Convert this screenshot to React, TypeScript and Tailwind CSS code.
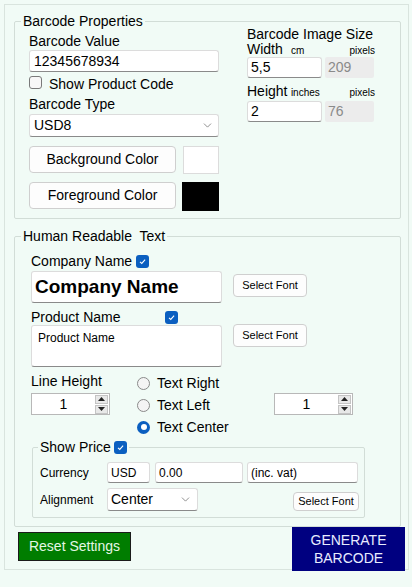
import { ChevronDown } from 'lucide-react';

const inputBox =
  'bg-white border border-[#dcdcdc] border-b-[#8a8a8a] rounded-[3px] flex items-center';
const button =
  'bg-[#fdfdfd] border border-[#cfcfcf] rounded-[4px] flex items-center justify-center text-black';

const Checked = () => (
  <span className="flex h-[13px] w-[13px] items-center justify-center rounded-[3px] bg-[#0b5fc0]">
    <svg width="9" height="9" viewBox="0 0 10 10">
      <path d="M2.2 5.3 4.2 7.2 7.9 3" fill="none" stroke="white" strokeWidth="1.2" />
    </svg>
  </span>
);

const Radio = ({ on, label }: { on?: boolean; label: string }) => (
  <div className="flex h-[22px] items-center">
    {on ? (
      <span className="flex h-[13px] w-[13px] items-center justify-center rounded-full bg-[#0b5fc0]">
        <span className="h-[6px] w-[6px] rounded-full bg-white" />
      </span>
    ) : (
      <span className="h-[13px] w-[13px] rounded-full border border-[#8a8a8a] bg-[#f4f4f4]" />
    )}
    <span className="ml-[7px] text-[14px] leading-[18px]">{label}</span>
  </div>
);

const Spinner = () => (
  <div className="flex h-[22px] w-[79px] items-center border border-[#b8b8b8] bg-white">
    <span className="flex-1 text-center text-[14px] leading-[18px]">1</span>
    <div className="mr-[1px] flex flex-col gap-[1px]">
      <span className="flex h-[9px] w-[13px] items-center justify-center border border-[#c4c4c4] bg-[#e8e8e8]">
        <svg width="7" height="4" viewBox="0 0 7 4">
          <path d="M0 4 3.5 0 7 4Z" fill="#222" />
        </svg>
      </span>
      <span className="flex h-[9px] w-[13px] items-center justify-center border border-[#c4c4c4] bg-[#e8e8e8]">
        <svg width="7" height="4" viewBox="0 0 7 4">
          <path d="M0 0 3.5 4 7 0Z" fill="#222" />
        </svg>
      </span>
    </div>
  </div>
);

export default function App() {
  return (
    <div className="h-[587px] w-[412px] bg-[#f1fbf6] pl-[4px] pt-[4px] font-['Liberation_Sans',Arial,sans-serif] text-black">
      <div className="flex h-[566px] w-[405px] flex-col border border-[#d9e4de]">
        {/* Barcode Properties */}
        <fieldset className="ml-[9px] mt-[7px] w-[387px] rounded-[2px] border border-[#d2ddd7] pb-[7px]">
          <legend className="ml-[6px] px-[2px] text-[14px] leading-[18px]">Barcode Properties</legend>
          <div className="flex">
            <div className="ml-[14px] flex w-[190px] flex-col">
              <span className="mt-[2px] text-[14px] leading-[18px]">Barcode Value</span>
              <div className={`${inputBox} h-[22px] px-[4px] text-[14px]`}>12345678934</div>
              <div className="mt-[3px] flex h-[18px] items-start">
                <span className="mt-[1px] h-[13px] w-[13px] rounded-[3px] border border-[#7a7a7a] bg-[#f7f7f7]" />
                <span className="ml-[7px] text-[14px] leading-[18px]">Show Product Code</span>
              </div>
              <span className="mt-[2px] text-[14px] leading-[18px]">Barcode Type</span>
              <div className={`${inputBox} mt-[1px] h-[23px] justify-between pl-[4px] pr-[4px] text-[14px]`}>
                <span>USD8</span>
                <ChevronDown size={13} strokeWidth={1.2} color="#555" />
              </div>
              <div className="mt-[9px] flex items-start">
                <div className={`${button} h-[27px] w-[147px] text-[14px]`}>Background Color</div>
                <span className="ml-[7px] h-[28px] w-[36px] border border-[#dcdcdc] bg-white" />
              </div>
              <div className="mt-[8px] flex items-start">
                <div className={`${button} h-[27px] w-[147px] text-[14px]`}>Foreground Color</div>
                <span className="ml-[6px] h-[29px] w-[37px] bg-black" />
              </div>
            </div>
            <div className="ml-[28px] -mt-[4px] flex w-[128px] flex-col">
              <span className="text-[14px] leading-[16px]">Barcode Image Size</span>
              <div className="-mt-[1px] flex h-[16px] items-baseline">
                <span className="w-[45px] text-[14px] leading-[16px]">Width</span>
                <span className="w-[60px] text-[10px]">cm</span>
                <span className="text-[10px]">pixels</span>
              </div>
              <div className="flex gap-[3px]">
                <div className={`${inputBox} h-[21px] w-[75px] px-[3px] text-[14px]`}>5,5</div>
                <div className="flex h-[21px] w-[49px] items-center rounded-[2px] bg-[#ececec] px-[3px] text-[14px] text-[#8a8a8a]">209</div>
              </div>
              <div className="mt-[5px] flex h-[16px] items-baseline">
                <span className="w-[45px] text-[14px] leading-[16px]">Height</span>
                <span className="w-[60px] text-[10px]">inches</span>
                <span className="text-[10px]">pixels</span>
              </div>
              <div className="mt-[2px] flex gap-[3px]">
                <div className={`${inputBox} h-[21px] w-[75px] px-[3px] text-[14px]`}>2</div>
                <div className="flex h-[21px] w-[49px] items-center rounded-[2px] bg-[#ececec] px-[3px] text-[14px] text-[#8a8a8a]">76</div>
              </div>
            </div>
          </div>
        </fieldset>

        {/* Human Readable Text */}
        <fieldset className="ml-[9px] mt-[8px] w-[387px] rounded-[2px] border border-[#d2ddd7] pb-[8px]">
          <legend className="ml-[6px] whitespace-pre px-[2px] text-[14px] leading-[18px]">Human Readable  Text</legend>
          <div className="ml-[16px] flex flex-col">
            <div className="mt-[7px] flex h-[18px] items-center">
              <span className="w-[105px] text-[14px] leading-[18px]">Company Name</span>
              <Checked />
            </div>
            <div className="mt-[1px] flex items-start">
              <div className={`${inputBox} h-[32px] w-[191px] px-[3px] text-[19px] font-bold`}>Company Name</div>
              <div className={`${button} ml-[11px] mt-[3px] h-[23px] w-[74px] text-[11px]`}>Select Font</div>
            </div>
            <div className="mt-[5px] flex h-[18px] items-center">
              <span className="w-[134px] text-[14px] leading-[18px]">Product Name</span>
              <Checked />
            </div>
            <div className="-mt-[1px] flex items-start">
              <div className={`${inputBox} h-[42px] w-[191px] items-start px-[6px] pt-[3px] text-[12px]`}>Product Name</div>
              <div className={`${button} ml-[11px] -mt-[1px] h-[23px] w-[74px] text-[11px]`}>Select Font</div>
            </div>
            <div className="mt-[5px] flex items-start">
              <div className="flex w-[106px] flex-col">
                <span className="text-[14px] leading-[18px]">Line Height</span>
                <div className="mt-[3px]">
                  <Spinner />
                </div>
              </div>
              <div className="flex w-[137px] flex-col">
                <Radio label="Text Right" />
                <Radio label="Text Left" />
                <Radio on label="Text Center" />
              </div>
              <div className="mt-[21px]">
                <Spinner />
              </div>
            </div>

            {/* Show Price */}
            <fieldset className="ml-[1px] w-[333px] rounded-[2px] border border-[#d2ddd7] pb-[6px]">
              <legend className="ml-[5px] flex items-center px-[2px] text-[14px] leading-[18px]">
                <span>Show Price</span>
                <span className="ml-[3px]">
                  <Checked />
                </span>
              </legend>
              <div className="mt-[6px] flex items-center pl-[7px]">
                <span className="w-[67px] text-[12px]">Currency</span>
                <div className={`${inputBox} h-[21px] w-[43px] px-[3px] text-[12px]`}>USD</div>
                <div className={`${inputBox} ml-[5px] h-[21px] w-[88px] px-[3px] text-[12px]`}>0.00</div>
                <div className={`${inputBox} ml-[4px] h-[21px] w-[111px] px-[3px] text-[12px]`}>(inc. vat)</div>
              </div>
              <div className="mt-[5px] flex items-start pl-[7px] pr-[5px]">
                <span className="mt-[4px] w-[67px] text-[12px] leading-[16px]">Alignment</span>
                <div className={`${inputBox} h-[23px] w-[91px] justify-between pl-[3px] pr-[5px] text-[14px]`}>
                  <span>Center</span>
                  <ChevronDown size={13} strokeWidth={1.2} color="#555" />
                </div>
                <div className={`${button} ml-auto mt-[4px] h-[19px] w-[66px] text-[11px]`}>Select Font</div>
              </div>
            </fieldset>
          </div>
        </fieldset>

        {/* Bottom buttons */}
        <div className="flex items-start">
          <div className="ml-[13px] mt-[5px] flex h-[29px] w-[113px] items-center justify-center border border-[#1b1b1b] bg-[#007d00] text-[14px] text-[#e4f7e4]">
            Reset Settings
          </div>
          <div className="ml-auto mr-[3px] flex h-[44px] w-[113px] flex-col items-center justify-center bg-[#000080] text-center text-[14px] leading-[18px] text-[#e8ecff]">
            <span>GENERATE</span>
            <span>BARCODE</span>
          </div>
        </div>
      </div>
    </div>
  );
}
